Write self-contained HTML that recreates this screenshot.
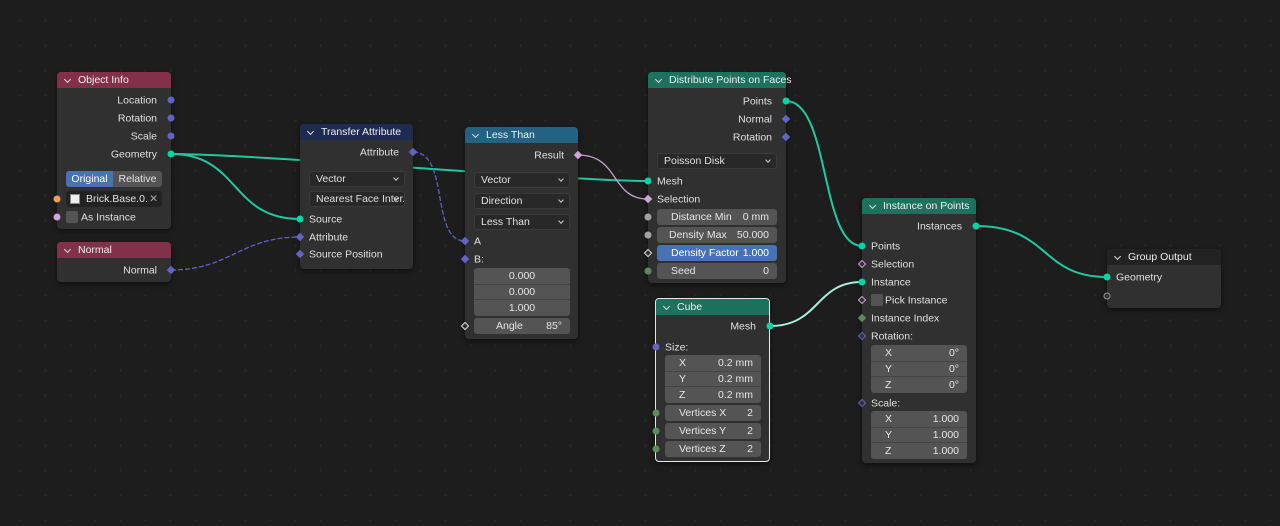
<!DOCTYPE html>
<html><head><meta charset="utf-8"><style>
*{margin:0;padding:0;box-sizing:border-box}
body{width:1280px;height:526px;overflow:hidden;background:#1d1d1d;background-image:radial-gradient(#2a2a2a 1px,transparent 1.2px);background-size:25px 25px;background-position:8px 8px;font-family:"Liberation Sans",sans-serif;font-size:10.5px;color:#e0e0e0;position:relative}
svg.w{position:absolute;left:0;top:0}
.n{position:absolute;background:#303030;border-radius:4px;box-shadow:0 2px 6px rgba(0,0,0,.5)}
.h{position:absolute;left:0;top:0;right:0;height:16px;border-radius:4px 4px 0 0;padding-left:21px;line-height:17px;color:#eee;white-space:nowrap}
.h:before{content:"";position:absolute;left:8px;top:5px;width:4px;height:4px;border-right:1px solid #ddd;border-bottom:1px solid #ddd;transform:rotate(45deg)}
.r{position:absolute;right:14px;transform:translateY(-45%);white-space:nowrap}
.l{position:absolute;left:9px;transform:translateY(-45%);white-space:nowrap}
.s{position:absolute;width:7px;height:7px;border-radius:50%;transform:translate(-50%,-50%)}
.d{position:absolute;width:6px;height:6px;transform:translate(-50%,-50%) rotate(45deg)}
.dd{position:absolute;left:9px;width:96px;height:16px;background:#282828;border:1px solid #3a3a3a;border-radius:3px;padding-left:6px;line-height:15px;white-space:nowrap;overflow:hidden}
.dd:after{content:"";position:absolute;right:6px;top:4px;width:3px;height:3px;border-right:1px solid #ccc;border-bottom:1px solid #ccc;transform:rotate(45deg)}
.f{position:absolute;left:9px;width:96px;height:16px;background:#545454;border-radius:3px;line-height:17px;color:#e6e6e6;white-space:nowrap}
.f .a{position:absolute;left:14px}.f .b{position:absolute;right:8px}
.fc{text-align:center}
.g{background:#00d6a3}.v{background:#6363c7}.p{background:#cca6d6}.gr{background:#a1a1a1}.in{background:#598c5c}
</style></head><body>
<svg class="w" width="1280" height="526">
<g fill="none" stroke-width="2">
<path d="M171 154 C 260 154, 560 181, 648 181" stroke="#1fc9a0"/>
<path d="M171 154 C 240 154, 230 219, 300 219" stroke="#1fc9a0"/>
<path d="M171 270 C 230 270, 240 237, 300 237" stroke="#6161c0" stroke-width="1.3" stroke-dasharray="5 2"/>
<path d="M413 152 C 450 152, 430 241, 465 241" stroke="#6161c0" stroke-width="1.3" stroke-dasharray="5 2"/>
<path d="M578 155 C 620 155, 610 199, 648 199" stroke="#c8a0d0" stroke-width="1.3"/>
<path d="M786 101 C 830 101, 820 246, 862 246" stroke="#1fc9a0"/>
<path d="M770 326 C 820 326, 815 282, 862 282" stroke="#a8f0dc"/>
<path d="M976 226 C 1050 226, 1040 277, 1107 277" stroke="#1fc9a0"/>
</g></svg>

<!-- Object Info -->
<div class="n" style="left:57px;top:72px;width:114px;height:157px">
<div class="h" style="background:#83314a">Object Info</div>
<div class="r" style="top:28px">Location</div><div class="s v" style="left:114px;top:28px"></div>
<div class="r" style="top:46px">Rotation</div><div class="s v" style="left:114px;top:46px"></div>
<div class="r" style="top:64px">Scale</div><div class="s v" style="left:114px;top:64px"></div>
<div class="r" style="top:82px">Geometry</div><div class="s g" style="left:114px;top:82px"></div>
<div style="position:absolute;left:9px;top:99px;width:47px;height:16px;background:#4772b3;border-radius:3px 0 0 3px;text-align:center;line-height:17px;color:#fff">Original</div>
<div style="position:absolute;left:56px;top:99px;width:49px;height:16px;background:#545454;border-radius:0 3px 3px 0;text-align:center;line-height:17px">Relative</div>
<div style="position:absolute;left:9px;top:119px;width:96px;height:16px;background:#222;border-radius:3px;line-height:17px;padding-left:20px;white-space:nowrap;overflow:hidden">Brick.Base.0...<span style="position:absolute;right:4px;color:#aaa;background:#222">✕</span><span style="position:absolute;left:4px;top:3px;width:10px;height:10px;background:#eee;border:1px solid #888"></span></div>
<div class="s" style="left:0;top:127px;background:#ed9e5c"></div>
<div style="position:absolute;left:9px;top:139px;width:12px;height:12px;background:#545454;border-radius:2px"></div>
<div class="l" style="left:24px;top:145px">As Instance</div><div class="s p" style="left:0;top:145px"></div>
</div>

<!-- Normal -->
<div class="n" style="left:57px;top:242px;width:114px;height:40px">
<div class="h" style="background:#83314a">Normal</div>
<div class="r" style="top:28px">Normal</div><div class="d v" style="left:114px;top:28px"></div>
</div>

<!-- Transfer Attribute -->
<div class="n" style="left:300px;top:124px;width:113px;height:145px">
<div class="h" style="background:#1e2a50">Transfer Attribute</div>
<div class="r" style="top:28px">Attribute</div><div class="d v" style="left:113px;top:28px"></div>
<div class="dd" style="top:47px">Vector</div>
<div class="dd" style="top:67px;padding-right:14px">Nearest Face Inter...</div>
<div class="l" style="top:95px">Source</div><div class="s g" style="left:0;top:95px"></div>
<div class="l" style="top:113px">Attribute</div><div class="d v" style="left:0;top:113px"></div>
<div class="l" style="top:130px">Source Position</div><div class="d v" style="left:0;top:130px"></div>
</div>

<!-- Less Than -->
<div class="n" style="left:465px;top:127px;width:113px;height:212px">
<div class="h" style="background:#246283">Less Than</div>
<div class="r" style="top:28px">Result</div><div class="d p" style="left:113px;top:28px"></div>
<div class="dd" style="top:45px">Vector</div>
<div class="dd" style="top:66px">Direction</div>
<div class="dd" style="top:87px">Less Than</div>
<div class="l" style="top:114px">A</div><div class="d v" style="left:0;top:114px"></div>
<div class="l" style="top:132px">B:</div><div class="d v" style="left:0;top:132px"></div>
<div class="f fc" style="top:141px;border-radius:3px 3px 0 0">0.000</div>
<div class="f fc" style="top:157px;border-radius:0;border-top:1px solid #444;border-bottom:1px solid #444;line-height:15px">0.000</div>
<div class="f fc" style="top:173px;border-radius:0 0 3px 3px">1.000</div>
<div class="f" style="top:191px"><span class="a" style="left:22px">Angle</span><span class="b">85°</span></div>
<div class="d" style="left:0;top:199px;border:1px solid #ddd;background:#303030"></div>
</div>

<!-- Distribute -->
<div class="n" style="left:648px;top:72px;width:138px;height:211px">
<div class="h" style="background:#1d725e">Distribute Points on Faces</div>
<div class="r" style="top:29px">Points</div><div class="s g" style="left:138px;top:29px"></div>
<div class="r" style="top:47px">Normal</div><div class="d v" style="left:138px;top:47px"></div>
<div class="r" style="top:65px">Rotation</div><div class="d v" style="left:138px;top:65px"></div>
<div class="dd" style="top:81px;width:120px">Poisson Disk</div>
<div class="l" style="top:109px">Mesh</div><div class="s g" style="left:0;top:109px"></div>
<div class="l" style="top:127px">Selection</div><div class="d p" style="left:0;top:127px"></div>
<div class="f" style="top:137px;width:120px"><span class="a">Distance Min</span><span class="b">0 mm</span></div><div class="s gr" style="left:0;top:145px"></div>
<div class="f" style="top:155px;width:120px"><span class="a" style="left:12px">Density Max</span><span class="b">50.000</span></div><div class="s gr" style="left:0;top:163px"></div>
<div class="f" style="top:173px;width:120px;background:#4772b3;color:#fff"><span class="a">Density Factor</span><span class="b">1.000</span></div><div class="d" style="left:0;top:181px;border:1px solid #ddd;background:#303030"></div>
<div class="f" style="top:191px;width:120px"><span class="a">Seed</span><span class="b">0</span></div><div class="s in" style="left:0;top:199px"></div>
</div>

<!-- Cube -->
<div class="n" style="left:655px;top:298px;width:115px;height:164px;border:1px solid #e8e8e8">
<div class="h" style="background:#1d725e;left:0;top:0">Cube</div>
<div class="r" style="top:27px;right:13px">Mesh</div><div class="s g" style="left:114px;top:27px"></div>
<div class="l" style="top:48px">Size:</div><div class="s v" style="left:0;top:48px"></div>
<div class="f" style="top:56px;border-radius:3px 3px 0 0"><span class="a">X</span><span class="b">0.2 mm</span></div>
<div class="f" style="top:72px;border-radius:0;border-top:1px solid #444;border-bottom:1px solid #444;line-height:15px"><span class="a">Y</span><span class="b">0.2 mm</span></div>
<div class="f" style="top:88px;border-radius:0 0 3px 3px"><span class="a">Z</span><span class="b">0.2 mm</span></div>
<div class="f" style="top:106px"><span class="a">Vertices X</span><span class="b">2</span></div><div class="s in" style="left:0;top:114px"></div>
<div class="f" style="top:124px"><span class="a">Vertices Y</span><span class="b">2</span></div><div class="s in" style="left:0;top:132px"></div>
<div class="f" style="top:142px"><span class="a">Vertices Z</span><span class="b">2</span></div><div class="s in" style="left:0;top:150px"></div>
</div>

<!-- Instance on Points -->
<div class="n" style="left:862px;top:198px;width:114px;height:265px">
<div class="h" style="background:#1d725e">Instance on Points</div>
<div class="r" style="top:28px">Instances</div><div class="s g" style="left:114px;top:28px"></div>
<div class="l" style="top:48px">Points</div><div class="s g" style="left:0;top:48px"></div>
<div class="l" style="top:66px">Selection</div><div class="d" style="left:0;top:66px;border:1px solid #cca6d6;background:#303030"></div>
<div class="l" style="top:84px">Instance</div><div class="s g" style="left:0;top:84px"></div>
<div style="position:absolute;left:9px;top:96px;width:12px;height:12px;background:#545454;border-radius:2px"></div>
<div class="l" style="left:23px;top:102px">Pick Instance</div><div class="d" style="left:0;top:102px;border:1px solid #cca6d6;background:#303030"></div>
<div class="l" style="top:120px">Instance Index</div><div class="d in" style="left:0;top:120px"></div>
<div class="l" style="top:138px">Rotation:</div><div class="d" style="left:0;top:138px;border:1px solid #6363c7;background:#303030"></div>
<div class="f" style="top:147px;border-radius:3px 3px 0 0"><span class="a">X</span><span class="b">0°</span></div>
<div class="f" style="top:163px;border-radius:0;border-top:1px solid #444;border-bottom:1px solid #444;line-height:15px"><span class="a">Y</span><span class="b">0°</span></div>
<div class="f" style="top:179px;border-radius:0 0 3px 3px"><span class="a">Z</span><span class="b">0°</span></div>
<div class="l" style="top:205px">Scale:</div><div class="d" style="left:0;top:205px;border:1px solid #6363c7;background:#303030"></div>
<div class="f" style="top:213px;border-radius:3px 3px 0 0"><span class="a">X</span><span class="b">1.000</span></div>
<div class="f" style="top:229px;border-radius:0;border-top:1px solid #444;border-bottom:1px solid #444;line-height:15px"><span class="a">Y</span><span class="b">1.000</span></div>
<div class="f" style="top:245px;border-radius:0 0 3px 3px"><span class="a">Z</span><span class="b">1.000</span></div>
</div>

<!-- Group Output -->
<div class="n" style="left:1107px;top:249px;width:114px;height:59px">
<div class="h" style="background:#222">Group Output</div>
<div class="l" style="top:28px">Geometry</div><div class="s g" style="left:0;top:28px"></div>
<div class="s" style="left:0;top:47px;border:1px solid #999;background:#303030"></div>
</div>
</body></html>
